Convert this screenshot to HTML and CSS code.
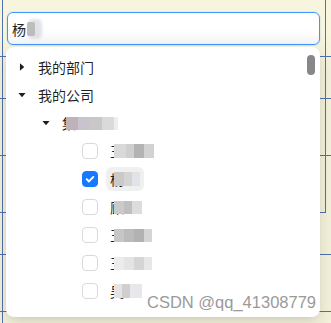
FILE: index.html
```html
<!DOCTYPE html>
<html lang="zh">
<head>
<meta charset="utf-8">
<link rel="stylesheet" href="styles.css">
</head>
<body>
<div class="page">
  <div class="search">
    <span class="typed">杨</span><span class="blur-blob"></span>
  </div>
  <div class="dropdown">
    <div class="thumb"></div>
    <div class="node lv0">
      <span class="switcher"><svg class="caret right" viewBox="0 0 1024 1024"><path d="M840.4 300H183.6c-19.7 0-30.7 20.8-18.5 35l328.4 380.8c9.4 10.9 27.5 10.9 37 0L858.9 335c12.2-14.2 1.2-35-18.5-35z"/></svg></span>
      <span class="title">我的部门</span>
    </div>
    <div class="node lv0">
      <span class="switcher"><svg class="caret" viewBox="0 0 1024 1024"><path d="M840.4 300H183.6c-19.7 0-30.7 20.8-18.5 35l328.4 380.8c9.4 10.9 27.5 10.9 37 0L858.9 335c12.2-14.2 1.2-35-18.5-35z"/></svg></span>
      <span class="title">我的公司</span>
    </div>
    <div class="node lv1">
      <span class="switcher"><svg class="caret" viewBox="0 0 1024 1024"><path d="M840.4 300H183.6c-19.7 0-30.7 20.8-18.5 35l328.4 380.8c9.4 10.9 27.5 10.9 37 0L858.9 335c12.2-14.2 1.2-35-18.5-35z"/></svg></span>
      <span class="title"><span class="ch">集</span><span class="mosaic mz-a"></span></span>
    </div>
    <div class="node lv2">
      <span class="switcher"></span>
      <span class="checkbox"></span>
      <span class="title"><span class="ch">王</span><span class="mosaic mz-b"></span></span>
    </div>
    <div class="node lv2">
      <span class="switcher"></span>
      <span class="checkbox checked"><svg viewBox="0 0 16 16"><path d="M4.2 8.2l2.6 2.6 5-5.2" fill="none" stroke="#fff" stroke-width="2.2" stroke-linecap="round" stroke-linejoin="round"/></svg></span>
      <span class="title selected"><span class="ch">杨</span><span class="mosaic mz-c"></span></span>
    </div>
    <div class="node lv2">
      <span class="switcher"></span>
      <span class="checkbox"></span>
      <span class="title"><span class="ch">顾</span><span class="mosaic mz-d"></span></span>
    </div>
    <div class="node lv2">
      <span class="switcher"></span>
      <span class="checkbox"></span>
      <span class="title"><span class="ch">王</span><span class="mosaic mz-e"></span></span>
    </div>
    <div class="node lv2">
      <span class="switcher"></span>
      <span class="checkbox"></span>
      <span class="title"><span class="ch">王</span><span class="mosaic mz-f"></span></span>
    </div>
    <div class="node lv2">
      <span class="switcher"></span>
      <span class="checkbox"></span>
      <span class="title"><span class="ch">吴</span><span class="mosaic mz-g"></span></span>
    </div>
  </div>
  <div class="watermark">CSDN @qq_41308779</div>
</div>
</body>
</html>
```

FILE: styles.css
```css
html, body {
  margin: 0;
  padding: 0;
}

body {
  font-family: "Noto Sans CJK SC", "Microsoft YaHei", sans-serif;
  font-size: 14px;
  color: rgba(0, 0, 0, 0.88);
}

.page {
  position: relative;
  width: 331px;
  height: 323px;
  overflow: hidden;
  box-sizing: border-box;
  padding-top: 12px;
  background:
    linear-gradient(#5372b2, #5372b2) 2px 0 / 1px 100% no-repeat,
    linear-gradient(#5372b2, #5372b2) 325px 0 / 1px 213px no-repeat,
    linear-gradient(#5372b2, #5372b2) 0 56px / 100% 1px no-repeat,
    linear-gradient(#5372b2, #5372b2) 0 98px / 100% 1px no-repeat,
    linear-gradient(#5372b2, #5372b2) 0 155px / 100% 1px no-repeat,
    linear-gradient(#5372b2, #5372b2) 0 212px / 326px 1px no-repeat,
    linear-gradient(#5372b2, #5372b2) 0 254px / 100% 1px no-repeat,
    linear-gradient(#5372b2, #5372b2) 0 311px / 100% 1px no-repeat,
    #f7f5de;
}

.search {
  margin-left: 7px;
  width: 313px;
  height: 33px;
  box-sizing: border-box;
  border: 1px solid #4096ff;
  border-radius: 6px;
  background: linear-gradient(#ffffff 60%, #f6f7f9);
  box-shadow: 0 0 0 1px rgba(5, 145, 255, 0.08);
  display: flex;
  align-items: center;
  padding-left: 4px;
}

.typed {
  line-height: 22px;
  font-size: 14px;
  color: #222;
}

.blur-blob {
  display: inline-block;
  width: 8px;
  height: 14px;
  margin-left: 1px;
  background: #bdbdbd;
  box-shadow: 4px 0 3px 3px #e1e3e8;
  border-radius: 2px;
}

.dropdown {
  position: relative;
  margin: 2px 0 0 6px;
  width: 314px;
  height: 270px;
  box-sizing: border-box;
  padding: 8px 4px;
  background: #fff;
  border-radius: 8px;
  box-shadow: 0 6px 16px 0 rgba(0, 0, 0, 0.08), 0 3px 6px -4px rgba(0, 0, 0, 0.12), 0 9px 28px 8px rgba(0, 0, 0, 0.05);
  display: flex;
  flex-direction: column;
  gap: 4px;
}

.thumb {
  position: absolute;
  right: 5px;
  top: 8px;
  width: 8px;
  height: 20px;
  border-radius: 4px;
  background: #878787;
}

.node {
  display: flex;
  align-items: center;
  height: 24px;
  line-height: 24px;
}

.lv1 { padding-left: 24px; }
.lv2 { padding-left: 48px; }

.switcher {
  width: 24px;
  height: 24px;
  flex: none;
  display: flex;
  align-items: center;
  justify-content: center;
}

.caret {
  width: 10px;
  height: 10px;
  fill: rgba(0, 0, 0, 0.88);
}

.caret.right {
  transform: rotate(-90deg);
}

.checkbox {
  width: 16px;
  height: 16px;
  box-sizing: border-box;
  border: 1px solid #d9d9d9;
  border-radius: 4px;
  margin-right: 8px;
  flex: none;
  background: #fff;
}

.checkbox.checked {
  background: #1677ff;
  border-color: #1677ff;
  display: flex;
  align-items: center;
  justify-content: center;
}

.checkbox.checked svg {
  width: 14px;
  height: 14px;
}

.title {
  height: 24px;
  padding: 0 4px;
  display: flex;
  align-items: center;
  border-radius: 6px;
}

.title.selected {
  background: #f0f0f0;
}

.ch {
  display: inline-block;
  width: 14px;
  overflow: hidden;
  white-space: nowrap;
}

.mosaic {
  display: inline-block;
  height: 13px;
  margin-left: -10px;
}

.mz-a {
  width: 52px;
  background: linear-gradient(to right, #bcb4b8 0 12px, #c9c3cd 12px 24px, #c9c8c6 24px 36px, #dadada 36px 48px, #eee 48px);
}

.mz-b {
  width: 40px;
  height: 14px;
  background: linear-gradient(to right, #d9d9d9 0 12px, #cfcfcf 12px 20px, #b3b3b3 20px 30px, #d2d2d2 30px);
}

.mz-c {
  width: 26px;
  height: 14px;
  background: linear-gradient(to right, #c9c9c9 0 10px, #d4d4d4 10px 18px, #e0e3e8 18px);
}

.mz-d {
  width: 28px;
  height: 13px;
  background: linear-gradient(to right, #cacaca 0 10px, #bfbfbf 10px 18px, #dcdcdc 18px);
}

.mz-e {
  width: 38px;
  height: 13px;
  background: linear-gradient(to right, #c6c6c6 0 10px, #bbbbbb 10px 20px, #b2b2b2 20px 30px, #d5d5d5 30px);
}

.mz-f {
  width: 38px;
  height: 13px;
  background: linear-gradient(to right, #ececec 0 10px, #e4e4e4 10px 20px, #d5d5d5 20px 30px, #e7e7e7 30px);
}

.mz-g {
  width: 28px;
  height: 14px;
  background: linear-gradient(to right, #e4e4e4 0 8px, #cfcfcf 8px 16px, #e8e8ec 16px);
}

.watermark {
  position: absolute;
  left: 147px;
  top: 293px;
  font-family: "Liberation Sans", Arial, sans-serif;
  font-size: 16.5px;
  color: #9a9a9a;
  white-space: nowrap;
}
```
